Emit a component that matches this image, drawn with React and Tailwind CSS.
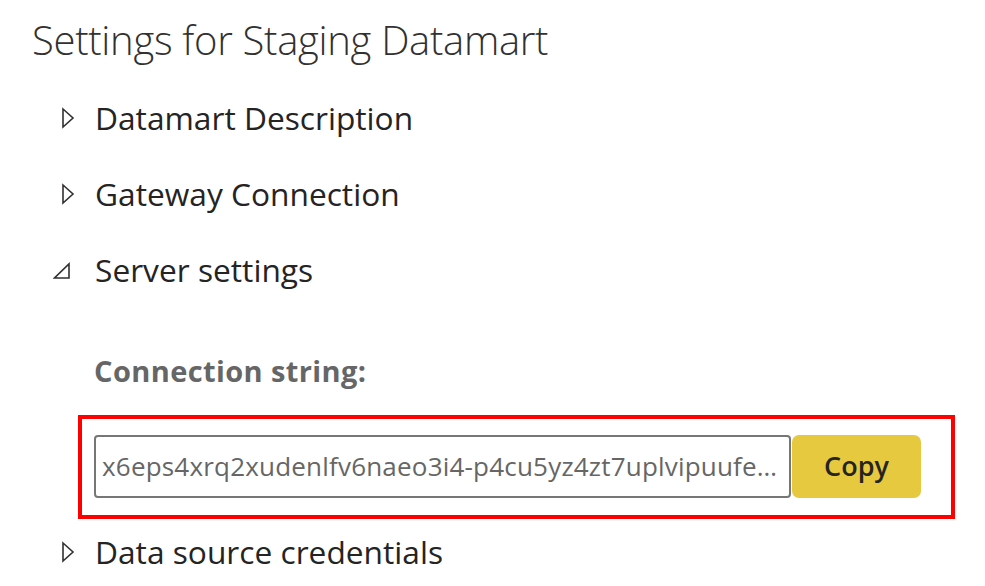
import React from 'react';

/* Outline chevron used for collapsed sections */
function CaretRight() {
  return (
    <svg width="14" height="22" viewBox="0 0 14 22" className="shrink-0">
      <path d="M2 2 L12 11 L2 20 Z" fill="none" stroke="#323130" strokeWidth="1.6" strokeLinejoin="miter" />
    </svg>
  );
}

/* Outline corner triangle used for the expanded section */
function CaretDown() {
  return (
    <svg width="18" height="18" viewBox="0 0 18 18" className="shrink-0">
      <path d="M1.5 16 L16 16 L16 2 Z" fill="none" stroke="#323130" strokeWidth="1.6" strokeLinejoin="miter" />
    </svg>
  );
}

function Section({ title, open }) {
  return (
    <div className="flex items-center h-[40px]">
      <div className="w-[34px] flex items-center">
        {open ? <div className="-ml-[8px] mt-[2px]"><CaretDown /></div> : <CaretRight />}
      </div>
      <span className="text-[31.7px] leading-none text-[#252423]">{title}</span>
    </div>
  );
}

export default function App() {
  return (
    <div className="w-[985px] h-[586px] bg-white overflow-hidden font-['Open_Sans','Noto_Sans',sans-serif]">
      <h1 className="pl-[32px] pt-[14px] text-[40px] leading-[52px] font-light text-[#323130] tracking-[-0.3px]">
        Settings for Staging Datamart
      </h1>

      <div className="pl-[61px] mt-[32px] flex flex-col gap-[36px]">
        <Section title="Datamart Description" />
        <Section title="Gateway Connection" />
        <Section title="Server settings" open />
      </div>

      <div className="pl-[94px] mt-[66px]">
        <div className="text-[29px] leading-none font-bold text-[#666666] tracking-[0.4px]">Connection string:</div>
      </div>

      <div className="ml-[78px] mt-[30px] w-[877px] h-[104px] border-4 border-[#ff0000] pl-[12px] pt-[16px]">
        <div className="flex">
          <div className="w-[697px] h-[63px] border-2 border-[#767676] rounded-[4px] flex items-center px-[6px] overflow-hidden">
            <span className="text-[26px] text-[#666666] whitespace-nowrap overflow-hidden text-ellipsis tracking-[0.2px]">
              x6eps4xrq2xudenlfv6naeo3i4-p4cu5yz4zt7uplvipuufe…
            </span>
          </div>
          <button className="ml-[1px] w-[129px] h-[63px] rounded-[7px] bg-[#e6c93e] text-[27px] font-semibold text-[#252423]">
            Copy
          </button>
        </div>
      </div>

      <div className="pl-[61px] mt-[13px]">
        <Section title="Data source credentials" />
      </div>
    </div>
  );
}
